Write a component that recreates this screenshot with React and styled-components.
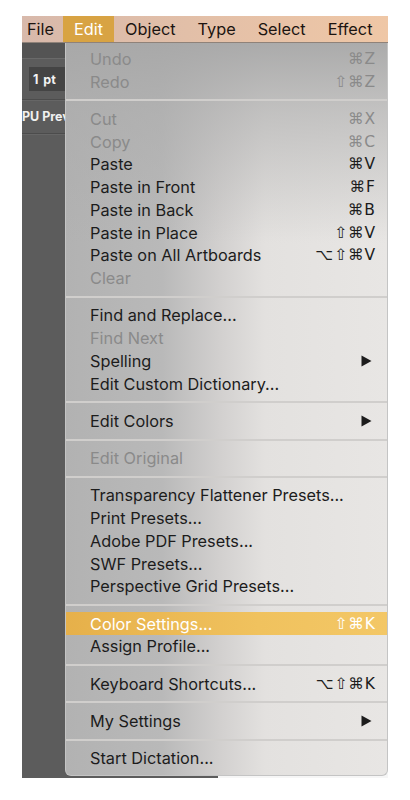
import React from 'react'
import styled, { createGlobalStyle } from 'styled-components'

const GlobalStyle = createGlobalStyle`
	html, body {
		margin: 0;
		padding: 0;
		background: #ffffff;
	}
	body {
		font-family: Inter, "Liberation Sans", "DejaVu Sans", sans-serif;
	}
`

const menuTitles = ['File', 'Edit', 'Object', 'Type', 'Select', 'Effect']

// each section is split from the next by a separator line
const sections = [
	[
		{ label: 'Undo', keys: '⌘Z', disabled: true },
		{ label: 'Redo', keys: '⇧⌘Z', disabled: true },
	],
	[
		{ label: 'Cut', keys: '⌘X', disabled: true },
		{ label: 'Copy', keys: '⌘C', disabled: true },
		{ label: 'Paste', keys: '⌘V' },
		{ label: 'Paste in Front', keys: '⌘F' },
		{ label: 'Paste in Back', keys: '⌘B' },
		{ label: 'Paste in Place', keys: '⇧⌘V' },
		{ label: 'Paste on All Artboards', keys: '⌥⇧⌘V' },
		{ label: 'Clear', disabled: true },
	],
	[
		{ label: 'Find and Replace...' },
		{ label: 'Find Next', disabled: true },
		{ label: 'Spelling', submenu: true },
		{ label: 'Edit Custom Dictionary...' },
	],
	[{ label: 'Edit Colors', submenu: true }],
	[{ label: 'Edit Original', disabled: true }],
	[
		{ label: 'Transparency Flattener Presets...' },
		{ label: 'Print Presets...' },
		{ label: 'Adobe PDF Presets...' },
		{ label: 'SWF Presets...' },
		{ label: 'Perspective Grid Presets...' },
	],
	[
		{ label: 'Color Settings...', keys: '⇧⌘K', active: true },
		{ label: 'Assign Profile...' },
	],
	[{ label: 'Keyboard Shortcuts...', keys: '⌥⇧⌘K' }],
	[{ label: 'My Settings', submenu: true }],
	[{ label: 'Start Dictation...' }],
]

function Arrow() {
	return (
		<svg width='11' height='12' viewBox='0 0 11 12'>
			<polygon points='0.5,0.5 10.5,6 0.5,11.5' fill='#1c1c1c' />
		</svg>
	)
}

function App() {
	return (
		<>
			<GlobalStyle />
			<Page>
				<Frame>
					<MenuBar>
						{menuTitles.map((t, i) => (
							<BarItem key={t} $open={t === 'Edit'} $first={i === 0}>
								{t}
							</BarItem>
						))}
					</MenuBar>
					<Workspace>
						<PanelStrip />
						<PanelRow $h={41}>
							<StrokeBox>1 pt</StrokeBox>
						</PanelRow>
						<PanelRow $h={34}>
							<PanelLabel>PU Preview</PanelLabel>
						</PanelRow>
						<Menu>
							{sections.map((items, si) => (
								<React.Fragment key={si}>
									{si > 0 && <Separator />}
									{items.map((it) => (
										<Row key={it.label} $disabled={it.disabled} $active={it.active}>
											<span>{it.label}</span>
											{it.keys && <Keys>{it.keys}</Keys>}
											{it.submenu && (
												<ArrowSlot>
													<Arrow />
												</ArrowSlot>
											)}
										</Row>
									))}
								</React.Fragment>
							))}
						</Menu>
					</Workspace>
				</Frame>
			</Page>
		</>
	)
}

const Page = styled.div`
	width: 410px;
	height: 800px;
	padding: 16px 0 0 22px;
	box-sizing: border-box;
	background: #ffffff;
	overflow: hidden;
`
const Frame = styled.div`
	width: 366px;
	display: flex;
	flex-direction: column;
`
const MenuBar = styled.nav`
	height: 26px;
	display: flex;
	align-items: stretch;
	background: linear-gradient(to right, #d8b9ab 0%, #e2bfa8 45%, #efc7a6 100%);
	border-bottom: 1px solid #8f8279;
	overflow: hidden;
`
const BarItem = styled.div`
	display: flex;
	align-items: center;
	padding: ${(p) => (p.$first ? '0 9px 0 5px' : '0 11px')};
	font-size: 16.3px;
	color: ${(p) => (p.$open ? '#ffffff' : '#1c1410')};
	background: ${(p) => (p.$open ? '#d8a343' : 'transparent')};
`
const Workspace = styled.div`
	position: relative;
	height: 735px;
	display: flex;
	flex-direction: column;
	background: linear-gradient(to right, #5c5c5c 196px, #f6f6f6 196px);
`
const PanelStrip = styled.div`
	width: 196px;
	height: 15px;
	background: #545454;
	border-bottom: 1px solid #6a6a6a;
`
const PanelRow = styled.div`
	width: 196px;
	height: ${(p) => p.$h}px;
	display: flex;
	align-items: center;
	border-bottom: 1px solid #4c4c4c;
	box-shadow: 0 1px 0 #666666;
	box-sizing: border-box;
`
const StrokeBox = styled.div`
	margin-left: 7px;
	width: 70px;
	height: 24px;
	display: flex;
	align-items: center;
	padding-left: 4px;
	box-sizing: border-box;
	background: #444444;
	color: #f2f2f2;
	font-size: 12.5px;
	font-weight: 700;
	word-spacing: 2px;
`
const PanelLabel = styled.div`
	white-space: nowrap;
	color: #f0f0f0;
	font-size: 12.5px;
	font-weight: 700;
`
// the open dropdown lies over the workspace panels
const Menu = styled.div`
	position: absolute;
	top: 0;
	left: 43px;
	width: 323px;
	height: 733px;
	box-sizing: border-box;
	padding-top: 4.6px;
	border: 1px solid #c4c4c4;
	border-top: none;
	border-radius: 0 0 6px 6px;
	background:
		linear-gradient(to bottom, rgba(168, 168, 168, 0.95) 0px, rgba(172, 172, 172, 0.6) 70px, rgba(180, 180, 180, 0) 200px),
		linear-gradient(to right, #b2b2b2 0%, #b9b9b9 30%, #d2d0cf 48%, #e3e1df 62%, #e8e6e4 100%);
`
const Row = styled.div`
	height: 22.75px;
	display: flex;
	align-items: center;
	justify-content: space-between;
	padding: 0 11px 0 24px;
	font-size: 16.3px;
	color: ${(p) => (p.$active ? '#ffffff' : p.$disabled ? '#8a8a8a' : '#1c1c1c')};
	background: ${(p) => (p.$active ? 'linear-gradient(to right, #e6b04a, #f0c25e 60%, #f3c766)' : 'transparent')};
`
const Keys = styled.span`
	font-family: "DejaVu Sans", Inter, sans-serif;
	font-size: 15.5px;
	letter-spacing: 1px;
`
const ArrowSlot = styled.span`
	display: flex;
	padding-right: 4px;
`
const Separator = styled.div`
	height: 2px;
	margin: 6.25px 0;
	background: #d0cecc;
`

export default App
